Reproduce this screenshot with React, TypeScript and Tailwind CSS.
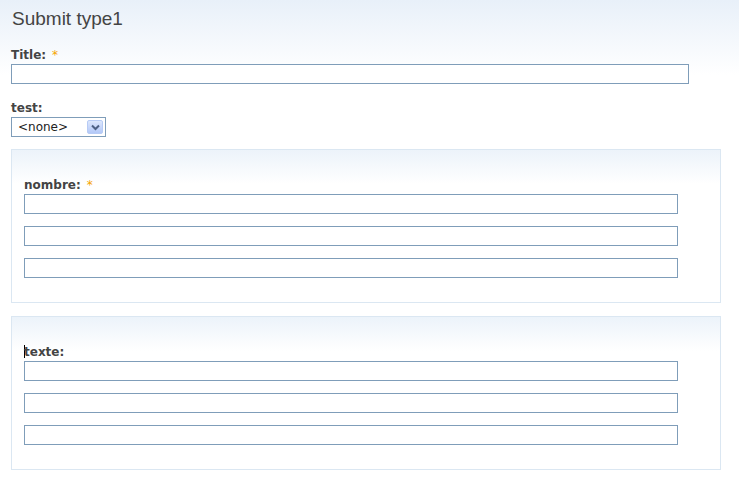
import React from 'react'

const labelCls = "block h-4 leading-4 text-[12px] font-bold text-[#444] font-['DejaVu_Sans',sans-serif]"
const inputCls = 'block h-5 border border-[#7f9db9] bg-white'

const Star = () => <span className="ml-[6px] font-normal text-[#f5a300]">*</span>

const Fieldset = ({ label, required, caret }: { label: string; required?: boolean; caret?: boolean }) => (
  <div className="w-[710px] border border-[#dbe7f2] bg-[linear-gradient(to_bottom,#ecf3fa,#ffffff_34px)] pt-[27px] pb-6 pl-3">
    <div className={labelCls}>
      {caret && <span className="inline-block w-px h-[13px] bg-black align-[-2px] -mr-px" />}
      {label}
      {required && <Star />}
    </div>
    <div className="mt-px flex flex-col gap-3">
      <div className={`${inputCls} w-[654px]`} />
      <div className={`${inputCls} w-[654px]`} />
      <div className={`${inputCls} w-[654px]`} />
    </div>
  </div>
)

export default function App() {
  return (
    <div className="min-h-screen bg-[linear-gradient(to_bottom,#e8f0f9,#ffffff_75px)] pl-[11px] pt-2">
      <h1 className="pl-px h-[22px] leading-[22px] text-[19px] text-[#444] font-['Liberation_Sans',Arial,sans-serif]">
        Submit type1
      </h1>

      <div className="mt-[17px]">
        <div className={labelCls}>
          Title:
          <Star />
        </div>
        <div className={`${inputCls} mt-px w-[678px]`} />
      </div>

      <div className="mt-4">
        <div className={labelCls}>test:</div>
        <div className="mt-px flex h-5 w-[95px] items-center justify-between border border-[#7f9db9] bg-white pl-[6px] pr-[2px]">
          <span className="text-[12px] leading-4 text-[#222] font-['DejaVu_Sans',sans-serif]">&lt;none&gt;</span>
          <span className="flex h-[14px] w-4 items-center justify-center rounded-[2px] border border-[#b7cbf5] bg-[linear-gradient(to_bottom,#dce7fd,#b3c8f7)]">
            <svg width="9" height="7" viewBox="0 0 9 7">
              <path d="M1 1.5 L4.5 5 L8 1.5" fill="none" stroke="#4d6185" strokeWidth="2" />
            </svg>
          </span>
        </div>
      </div>

      <div className="mt-3 flex flex-col gap-[13px]">
        <Fieldset label="nombre:" required />
        <Fieldset label="texte:" caret />
      </div>
    </div>
  )
}
